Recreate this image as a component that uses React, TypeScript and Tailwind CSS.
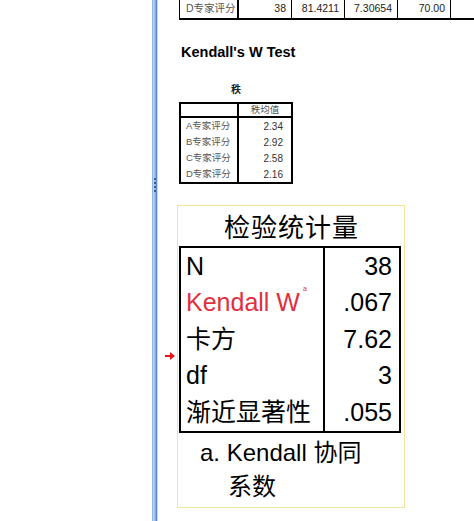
import React from "react";

const font = { fontFamily: '"Liberation Sans", "Noto Sans CJK SC", sans-serif' };

const topCells = ["38", "81.4211", "7.30654", "70.00", "9"];

const ranks = [
  { name: "A专家评分", value: "2.34" },
  { name: "B专家评分", value: "2.92" },
  { name: "C专家评分", value: "2.58" },
  { name: "D专家评分", value: "2.16" },
];

const stats = [
  { label: "N", value: "38" },
  { label: "Kendall W", value: ".067", red: true },
  { label: "卡方", value: "7.62" },
  { label: "df", value: "3" },
  { label: "渐近显著性", value: ".055" },
];

const Splitter: React.FC = () => (
  <div className="relative flex h-full shrink-0">
    <div className="w-px bg-[#8fb3e6]" />
    <div className="w-px bg-[#bcd5f4]" />
    <div className="w-px bg-[#a3c3ee]" />
    <div className="w-px bg-[#86abe2]" />
    <div className="w-px bg-[#5f88c8]" />
    <div className="w-px bg-[#c6daf3]" />
    <div className="absolute left-[2px] top-[178px] flex flex-col gap-[2px]">
      <div className="h-[2px] w-[2px] bg-[#3a5f9a]" />
      <div className="h-[2px] w-[2px] bg-[#3a5f9a]" />
      <div className="h-[2px] w-[2px] bg-[#3a5f9a]" />
      <div className="h-[2px] w-[2px] bg-[#3a5f9a]" />
    </div>
  </div>
);

export default function App() {
  return (
    <div className="flex h-[521px] w-[474px] overflow-hidden bg-white" style={font}>
      <div className="w-[152px] shrink-0 bg-white" />
      <Splitter />
      <div className="flex min-w-0 flex-1 flex-col overflow-hidden pl-[21px]">
        {/* last row of the descriptive statistics table */}
        <div className="flex h-[20px] w-[320px] shrink-0 border-b-2 border-l-[1.5px] border-black text-[10.5px] text-[#222]">
          <div className="flex w-[59px] shrink-0 items-center border-r-2 border-black pl-[6px] text-[#555]">D专家评分</div>
          {topCells.slice(0, 4).map((c, i) => (
            <div
              key={i}
              className="flex w-[53px] shrink-0 items-center justify-end border-r border-black pr-[5px]"
            >
              {c}
            </div>
          ))}
          <div className="flex flex-1 items-center justify-end pr-[2px]">{topCells[4]}</div>
        </div>

        <div className="ml-[2px] mt-[24px] text-[14.5px] font-bold leading-[16px] text-black">Kendall's W Test</div>

        <div className="mt-[24px] w-[114px] text-center text-[10px] font-bold leading-[12px] text-[#222]">秩</div>

        {/* rank table */}
        <div className="mt-[6px] w-[114px] border-2 border-black text-[10px] text-[#444]">
          <div className="flex h-[14px] border-b-2 border-black">
            <div className="w-[58px] border-r-2 border-black" />
            <div className="flex flex-1 items-center justify-center text-[9.5px] text-[#555]">秩均值</div>
          </div>
          {ranks.map((r) => (
            <div key={r.name} className="flex h-[16px] items-center">
              <div className="flex h-full w-[58px] items-center border-r-2 border-black pl-[5px] text-[9.5px] text-[#555]">
                {r.name}
              </div>
              <div className="flex-1 pr-[8px] text-right text-[#333]">{r.value}</div>
            </div>
          ))}
        </div>

        {/* test statistics box */}
        <div className="relative -ml-[2px] mt-[21px] w-[228px] border-[1.5px] border-[#f3e69a] pb-[3px] pl-[1px]">
          <div className="absolute -left-[13px] top-[146px] flex items-center">
            <div className="h-[2px] w-[5px] bg-[#e8161b]" />
            <div className="h-0 w-0 border-y-[4px] border-l-[5px] border-y-transparent border-l-[#e8161b]" />
          </div>
          <div className="pt-[4px] text-center text-[26px] leading-[36px] tracking-[1px] text-black">检验统计量</div>
          <div className="w-[222px] border-2 border-black text-[25px] text-black">
            {stats.map((s) => (
              <div key={s.label} className="flex h-[36.5px] items-center">
                <div
                  className={`flex h-full w-[144px] items-center border-r-2 border-black pl-[5px] ${
                    s.red ? "text-[#e0303e]" : "text-black"
                  }`}
                >
                  {s.label}
                  {s.red && <sup className="ml-[3px] self-start pt-[4px] text-[7px] leading-none">a</sup>}
                </div>
                <div className="flex-1 pr-[7px] text-right">{s.value}</div>
              </div>
            ))}
          </div>
          <div className="mt-[3px] pl-[49px] indent-[-28px] text-[24px] leading-[34px] text-black">
            a. Kendall 协同
            <br />
            系数
          </div>
        </div>
      </div>
    </div>
  );
}
